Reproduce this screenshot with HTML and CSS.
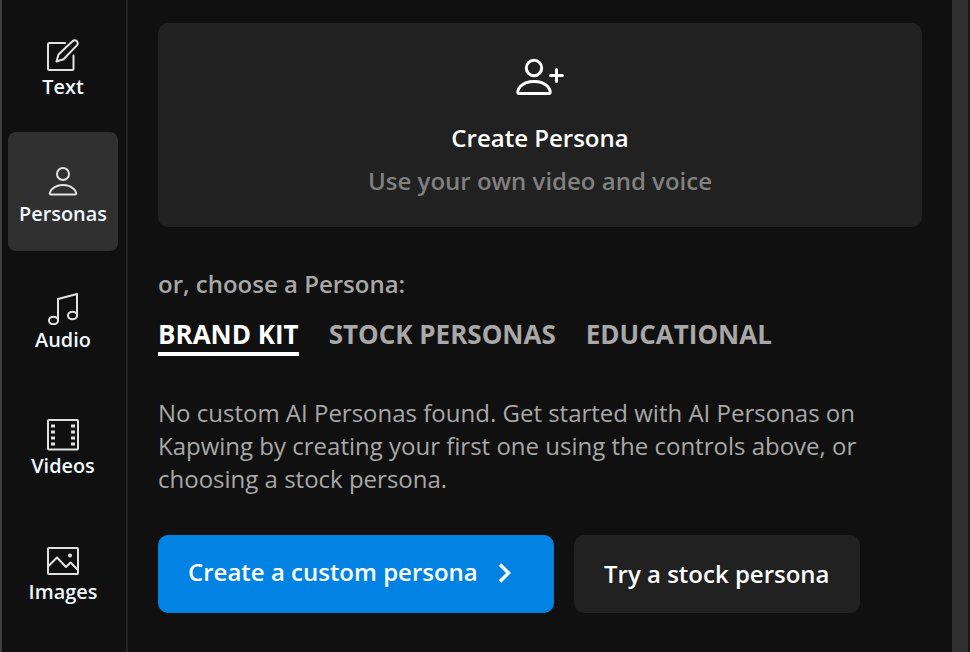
FILE: index.html
```html
<!DOCTYPE html>
<html lang="en">
<head>
    <meta charset="UTF-8">
    <meta name="viewport" content="width=device-width, initial-scale=1.0">
    <title>Personas</title>
    <link rel="stylesheet" href="styles.css">
</head>
<body>
    <div class="app">
        <nav class="sidebar">
            <a class="nav-item">
                <svg class="nav-icon" viewBox="0 0 36 36">
                    <path d="M20 6H4.500a1.500 1.500 0 0 0-1.500 1.500V31.500a1.500 1.500 0 0 0 1.500 1.500H27a1.500 1.500 0 0 0 1.500-1.500V18.500"/>
                    <path d="M11.500 24.500L13.500 17.500 27.500 4.200a3 3 0 0 1 4.400 4.200L18.500 22.300z"/>
                </svg>
                <span class="nav-label">Text</span>
            </a>
            <a class="nav-item active">
                <svg class="nav-icon" viewBox="0 0 36 36">
                    <circle cx="18" cy="11" r="6"/>
                    <path d="M6 31.500C3.700 31.500 5 28 7.500 25.800 13 20.800 23 20.800 28.500 25.800 31 28 32.300 31.500 30 31.500z"/>
                </svg>
                <span class="nav-label">Personas</span>
            </a>
            <a class="nav-item">
                <svg class="nav-icon" viewBox="0 0 36 36">
                    <ellipse cx="8.500" cy="31.500" rx="4.500" ry="3.800"/>
                    <ellipse cx="27.500" cy="26.500" rx="4.500" ry="3.800"/>
                    <path d="M13 31.500V10L32 5V26.500"/>
                </svg>
                <span class="nav-label">Audio</span>
            </a>
            <a class="nav-item">
                <svg class="nav-icon" viewBox="0 0 36 36">
                    <rect x="3" y="4" width="30" height="29.500" rx="1"/>
                    <path class="holes" d="M6 10H10M6 16H10M6 22H10M6 28H10M26 10H30M26 16H30M26 22H30M26 28H30"/>
                </svg>
                <span class="nav-label">Videos</span>
            </a>
            <a class="nav-item">
                <svg class="nav-icon" viewBox="0 0 36 36">
                    <rect x="3" y="6" width="30" height="26" rx="1"/>
                    <path d="M3 24.500L12 15.500 21 25 25.500 20.500 33 28"/>
                    <circle class="dot" cx="25" cy="13.500" r="2"/>
                </svg>
                <span class="nav-label">Images</span>
            </a>
        </nav>

        <main class="panel">
            <button class="create-card">
                <svg class="create-icon" viewBox="0 0 48 38">
                    <circle cx="18" cy="10" r="7.700"/>
                    <path d="M3 35.500C1 35.500 1.500 31.500 4.500 28.300 11 21.800 25 21.800 31.500 28.300 34.500 31.500 35 35.500 33 35.500z"/>
                    <path d="M34.500 17.500H46.500M40.500 11.500V23.500"/>
                </svg>
                <span class="create-title">Create Persona</span>
                <span class="create-subtitle">Use your own video and voice</span>
            </button>

            <p class="choose">or, choose a Persona:</p>

            <div class="tabs">
                <a class="tab selected">BRAND KIT</a>
                <a class="tab">STOCK PERSONAS</a>
                <a class="tab">EDUCATIONAL</a>
            </div>

            <p class="empty">No custom AI Personas found. Get started with AI Personas on Kapwing by creating your first one using the controls above, or choosing a stock persona.</p>

            <div class="actions">
                <button class="button primary">
                    <span>Create a custom persona</span>
                    <svg class="chevron" viewBox="0 0 14 20"><path d="M2 1.500L10.500 10 2 18.500"/></svg>
                </button>
                <button class="button secondary">Try a stock persona</button>
            </div>
        </main>
    </div>
</body>
</html>
```
FILE: styles.css
```css
* {
    box-sizing: border-box;
}

body {
    margin: 0;
    background: #101010;
    font-family: "Open Sans", "Noto Sans", sans-serif;
    color: #fff;
    overflow: hidden;
}

button {
    border: none;
    font-family: inherit;
    color: inherit;
}

svg {
    fill: none;
    stroke: currentColor;
    stroke-linecap: round;
    stroke-linejoin: round;
}

p {
    margin: 0;
}

.app {
    display: flex;
    height: 652px;
    border-left: 2px solid #404040;
    border-right: 2px solid #181818;
}

.sidebar {
    display: flex;
    flex-direction: column;
    gap: 7.2px;
    width: 126px;
    padding: 6px 8px 0 6px;
    border-right: 2px solid #222;
}

.nav-item {
    display: flex;
    flex-direction: column;
    align-items: center;
    flex-shrink: 0;
    height: 119px;
    padding-top: 31px;
    border-radius: 8px;
    font-size: 19.9px;
    font-weight: 600;
    line-height: 28px;
    color: #f0f8ff;
}

.nav-item.active {
    background: #303030;
}

.nav-icon {
    width: 36px;
    height: 36px;
    color: #e2e2e2;
    stroke-width: 2;
}

.nav-label {
    margin-top: 0.4px;
}

.holes {
    stroke-width: 3;
    stroke-linecap: butt;
}

.dot {
    fill: currentColor;
    stroke: none;
}

.panel {
    flex: 1;
    padding: 23px 30px 0;
    border-right: 16px solid #303030;
}

.create-card {
    display: flex;
    flex-direction: column;
    align-items: center;
    width: 100%;
    height: 204px;
    padding: 35px 0 0;
    border-radius: 10px;
    background: #212121;
    font-size: 24px;
    font-weight: 600;
    line-height: 34px;
}

.create-icon {
    width: 48px;
    height: 38px;
    stroke-width: 3;
}

.create-title {
    margin-top: 25px;
}

.create-subtitle {
    margin-top: 9px;
    color: #808080;
}

.choose {
    margin-top: 40px;
    font-size: 24px;
    font-weight: 600;
    line-height: 34px;
    color: #a8a8a8;
}

.tabs {
    display: flex;
    gap: 30px;
    margin-top: 14px;
}

.tab {
    height: 41px;
    font-size: 26px;
    font-weight: 700;
    line-height: 38px;
    color: #a8a8a8;
}

.tab.selected {
    color: #fff;
    border-bottom: 4px solid #fff;
}

.empty {
    margin-top: 40px;
    font-size: 24px;
    line-height: 33px;
    color: #a8a8a8;
}

.actions {
    display: flex;
    gap: 20px;
    margin-top: 40px;
}

.button {
    display: flex;
    align-items: center;
    height: 78px;
    padding: 0 30px 2px;
    border-radius: 10px;
    font-size: 24px;
    font-weight: 600;
}

.primary {
    width: 396px;
    padding-bottom: 5px;
    background: #0283e3;
}

.secondary {
    width: 286px;
    background: #212121;
}

.chevron {
    width: 14px;
    height: 20px;
    margin: 2px 0 0 20px;
    stroke-width: 3.5;
    stroke-linecap: butt;
    stroke-linejoin: miter;
}
```
